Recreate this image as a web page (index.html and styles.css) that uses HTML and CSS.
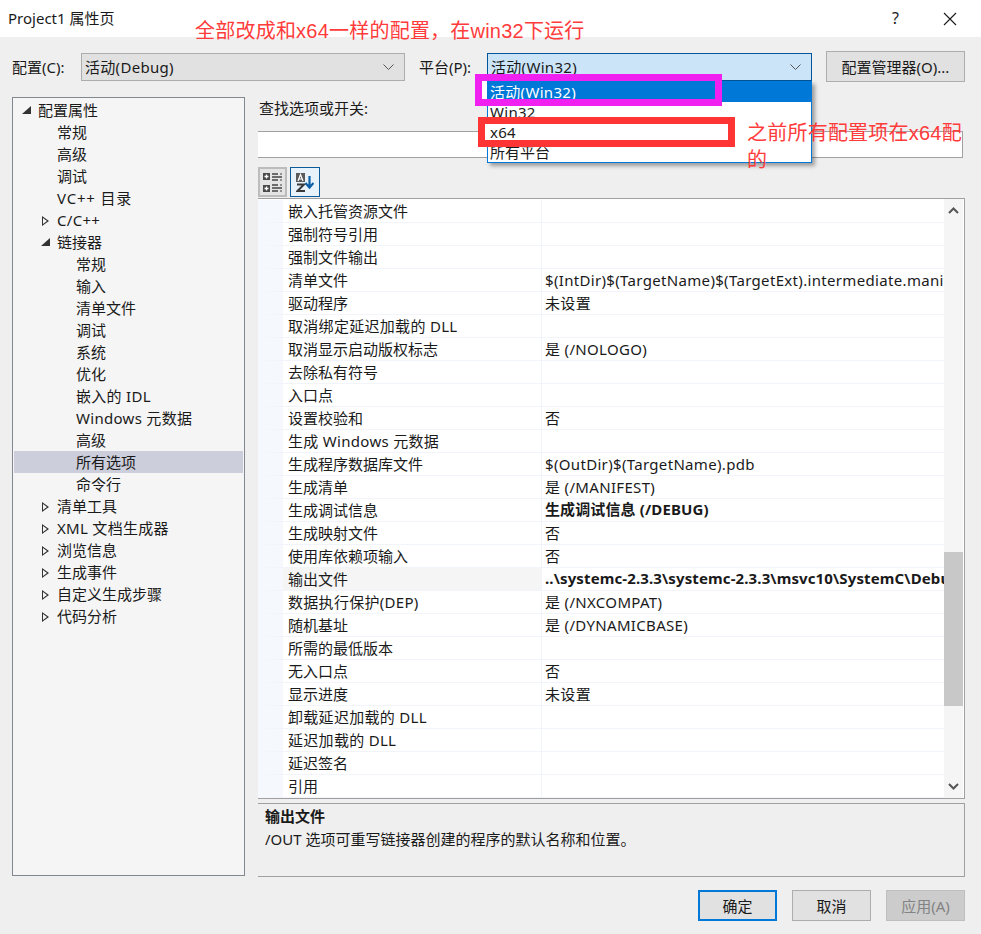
FILE: index.html
```html
<!DOCTYPE html>
<html lang="zh-CN">
<head>
<meta charset="utf-8">
<title>Project1 属性页</title>
<link rel="stylesheet" href="styles.css">
</head>
<body>
<div class="dialog">
  <header class="titlebar">
    <span class="title">Project1 属性页</span>
    <span class="help">?</span>
    <svg class="close" width="14" height="14" viewBox="0 0 14 14"><path d="M1 1L13 13M13 1L1 13" stroke="#1a1a1a" stroke-width="1.1" fill="none"/></svg>
  </header>

  <section class="config">
    <label class="config-label">配置(C):</label>
    <div class="select select-config"><span class="lat">活动(Debug)</span>
      <svg class="chev" width="11" height="6" viewBox="0 0 11 6"><path d="M.5 .5L5.5 5.5L10.5 .5" stroke="#555" fill="none"/></svg>
    </div>
    <label class="config-label platform-label">平台(P):</label>
    <div class="select select-platform"><span class="lat">活动(Win32)</span>
      <svg class="chev" width="11" height="6" viewBox="0 0 11 6"><path d="M.5 .5L5.5 5.5L10.5 .5" stroke="#555" fill="none"/></svg>
    </div>
    <button class="btn btn-manager">配置管理器(O)...</button>
  </section>

  <main class="panes">
    <nav class="tree">
      <div class="node l0"><i class="tri open"></i>配置属性</div>
      <div class="node l1">常规</div>
      <div class="node l1">高级</div>
      <div class="node l1">调试</div>
      <div class="node l1 lat-wide">VC++ 目录</div>
      <div class="node l1 lat"><i class="tri closed"></i>C/C++</div>
      <div class="node l1"><i class="tri open"></i>链接器</div>
      <div class="node l2">常规</div>
      <div class="node l2">输入</div>
      <div class="node l2">清单文件</div>
      <div class="node l2">调试</div>
      <div class="node l2">系统</div>
      <div class="node l2">优化</div>
      <div class="node l2 lat">嵌入的 IDL</div>
      <div class="node l2 lat">Windows 元数据</div>
      <div class="node l2">高级</div>
      <div class="node l2 selected">所有选项</div>
      <div class="node l2">命令行</div>
      <div class="node l1"><i class="tri closed"></i>清单工具</div>
      <div class="node l1 lat"><i class="tri closed"></i>XML 文档生成器</div>
      <div class="node l1"><i class="tri closed"></i>浏览信息</div>
      <div class="node l1"><i class="tri closed"></i>生成事件</div>
      <div class="node l1"><i class="tri closed"></i>自定义生成步骤</div>
      <div class="node l1"><i class="tri closed"></i>代码分析</div>
    </nav>

    <section class="options">
      <div class="search-label">查找选项或开关:</div>
      <div class="search"></div>
      <div class="toolbar">
        <button class="tool tool-cat">
          <svg width="19" height="19" viewBox="0 0 19 19">
            <rect x="0" y="0" width="7" height="7" fill="#4a4a4a"/><path d="M1.5 3.5H5.5M3.5 1.5V5.5" stroke="#fff" stroke-width="1.3"/>
            <rect x="0" y="12" width="7" height="7" fill="#4a4a4a"/><path d="M1.5 15.5H5.5M3.5 13.5V17.5" stroke="#fff" stroke-width="1.3"/>
            <path d="M9 1H15M9 4H19M9 7H15M9 12H15M9 15H19M9 18H15" stroke="#444" stroke-width="1.3"/>
            <path d="M17 1H19M17 7H19M17 12H19M17 18H19" stroke="#777" stroke-width="1.3"/>
          </svg>
        </button>
        <button class="tool tool-az">
          <svg width="18" height="19" viewBox="0 0 18 19">
            <rect x="0" y="0" width="9" height="9" fill="#5a5a5a"/>
            <path d="M2 8L4.5 1.5L7 8M2.9 6H6.1" stroke="#fff" stroke-width="1.2" fill="none"/>
            <path d="M1 11.5H8L1.5 18H9" stroke="#3a3a3a" stroke-width="2" fill="none"/>
            <path d="M13.5 3V14M9.5 10L13.5 14.5L17.5 10" stroke="#0b5fa8" stroke-width="2.2" fill="none"/>
          </svg>
        </button>
      </div>

      <div class="grid">
        <div class="rows">
          <div class="row"><div class="key">嵌入托管资源文件</div><div class="val"></div></div>
          <div class="row"><div class="key">强制符号引用</div><div class="val"></div></div>
          <div class="row"><div class="key">强制文件输出</div><div class="val"></div></div>
          <div class="row"><div class="key">清单文件</div><div class="val">$(IntDir)$(TargetName)$(TargetExt).intermediate.manifest</div></div>
          <div class="row"><div class="key">驱动程序</div><div class="val">未设置</div></div>
          <div class="row"><div class="key lat">取消绑定延迟加载的 DLL</div><div class="val"></div></div>
          <div class="row"><div class="key">取消显示启动版权标志</div><div class="val">是 (/NOLOGO)</div></div>
          <div class="row"><div class="key">去除私有符号</div><div class="val"></div></div>
          <div class="row"><div class="key">入口点</div><div class="val"></div></div>
          <div class="row"><div class="key">设置校验和</div><div class="val">否</div></div>
          <div class="row"><div class="key lat">生成 Windows 元数据</div><div class="val"></div></div>
          <div class="row"><div class="key">生成程序数据库文件</div><div class="val">$(OutDir)$(TargetName).pdb</div></div>
          <div class="row"><div class="key">生成清单</div><div class="val">是 (/MANIFEST)</div></div>
          <div class="row"><div class="key">生成调试信息</div><div class="val strong">生成调试信息 (/DEBUG)</div></div>
          <div class="row"><div class="key">生成映射文件</div><div class="val">否</div></div>
          <div class="row"><div class="key">使用库依赖项输入</div><div class="val">否</div></div>
          <div class="row current"><div class="key">输出文件</div><div class="val strong">..\systemc-2.3.3\systemc-2.3.3\msvc10\SystemC\Debug\SystemC.lib</div></div>
          <div class="row"><div class="key lat">数据执行保护(DEP)</div><div class="val">是 (/NXCOMPAT)</div></div>
          <div class="row"><div class="key">随机基址</div><div class="val">是 (/DYNAMICBASE)</div></div>
          <div class="row"><div class="key">所需的最低版本</div><div class="val"></div></div>
          <div class="row"><div class="key">无入口点</div><div class="val">否</div></div>
          <div class="row"><div class="key">显示进度</div><div class="val">未设置</div></div>
          <div class="row"><div class="key lat">卸载延迟加载的 DLL</div><div class="val"></div></div>
          <div class="row"><div class="key lat">延迟加载的 DLL</div><div class="val"></div></div>
          <div class="row"><div class="key">延迟签名</div><div class="val"></div></div>
          <div class="row"><div class="key">引用</div><div class="val"></div></div>
        </div>
        <div class="scrollbar">
          <svg class="sb-arrow" width="11" height="7" viewBox="0 0 11 7"><path d="M1 6L5.5 1.5L10 6" stroke="#555" stroke-width="2" fill="none"/></svg>
          <div class="sb-track"><div class="sb-thumb"></div></div>
          <svg class="sb-arrow" width="11" height="7" viewBox="0 0 11 7"><path d="M1 1L5.5 5.5L10 1" stroke="#555" stroke-width="2" fill="none"/></svg>
        </div>
      </div>

      <div class="desc">
        <div class="desc-title">输出文件</div>
        <div class="desc-text">/OUT 选项可重写链接器创建的程序的默认名称和位置。</div>
      </div>
    </section>
  </main>

  <footer class="footer">
    <button class="btn btn-foot btn-default">确定</button>
    <button class="btn btn-foot">取消</button>
    <button class="btn btn-foot btn-disabled">应用(A)</button>
  </footer>

  <div class="dropdown">
    <div class="opt opt-active lat">活动(Win32)</div>
    <div class="opt lat">Win32</div>
    <div class="opt lat">x64</div>
    <div class="opt">所有平台</div>
  </div>

  <div class="mark mark-magenta"></div>
  <div class="mark mark-red"></div>
  <div class="note note-top">全部改成和x64一样的配置，在win32下运行</div>
  <div class="note note-side">之前所有配置项在x64配<br>的</div>
</div>
</body>
</html>
```

FILE: styles.css
```css
* { box-sizing: border-box; }
html, body { margin: 0; padding: 0; }
body {
  width: 981px;
  height: 934px;
  overflow: hidden;
  font-family: "Noto Sans", "Noto Sans CJK SC", sans-serif;
  font-size: 15px;
  color: #1a1a1a;
}
.lat { letter-spacing: .3px; }
.lat-wide { letter-spacing: .8px; }
.dialog {
  position: relative;
  width: 981px;
  height: 934px;
  background: #efefef;
  display: flex;
  flex-direction: column;
}
.titlebar {
  height: 37px;
  flex: none;
  background: #fff;
  display: flex;
  align-items: center;
  padding: 0 24px 0 8px;
}
.title { flex: 1; line-height: 37px; }
.help { margin-right: 44px; line-height: 37px; font-size: 16px; }
.close { flex: none; }

.config {
  height: 31px;
  margin-top: 14px;
  padding: 0 16px 0 12px;
  display: flex;
  align-items: center;
  flex: none;
}
.config-label { width: 69px; flex: none; line-height: 28px; }
.platform-label { width: 68px; margin-left: 14px; }
.select {
  height: 28px;
  flex: none;
  display: flex;
  align-items: center;
  justify-content: space-between;
  padding: 0 10px 0 3px;
  border: 1px solid #adadad;
  background: #e1e1e1;
}
.select-config { width: 324px; }
.select-platform { width: 325px; background: #cce4f7; border-color: #005499; }
.btn {
  font: inherit;
  color: inherit;
  background: #e1e1e1;
  border: 1px solid #adadad;
  padding: 0;
  flex: none;
}
.btn-manager { width: 139px; height: 31px; margin-left: 14px; }

.panes {
  margin-top: 15px;
  padding-left: 12px;
  display: flex;
  gap: 13px;
  flex: none;
}
.tree {
  width: 233px;
  height: 779px;
  padding: 1px;
  border: 1px solid #828790;
  background: #f5f5f5;
}
.node {
  position: relative;
  height: 22px;
  line-height: 22px;
  white-space: nowrap;
}
.l0 { padding-left: 24px; }
.l1 { padding-left: 43px; }
.l2 { padding-left: 62px; }
.selected { background: #cccedb; }
.tri { position: absolute; top: 7px; width: 0; height: 0; }
.l0 .tri { left: 8px; }
.l1 .tri { left: 28px; }
.tri.open {
  border-bottom: 8px solid #333;
  border-left: 9px solid transparent;
}
.l1 .tri.open { left: 27px; }
.tri.closed {
  width: 7px;
  height: 10px;
  background: #333;
  clip-path: polygon(0 0, 100% 50%, 0 100%, 0 0, 1px 2px, 1px 8px, 5px 5px, 1px 2px);
}

.options { width: 707px; display: flex; flex-direction: column; }
.search-label { height: 22px; line-height: 22px; padding-left: 1px; }
.search {
  margin-top: 12px;
  width: 705px;
  height: 27px;
  background: #fff;
  border: 1px solid #a0a0a0;
  border-left: 0;
}
.toolbar { margin-top: 9px; height: 31px; display: flex; gap: 3px; }
.tool {
  width: 29px;
  height: 30px;
  padding: 0;
  display: flex;
  align-items: center;
  justify-content: center;
  border: 2px solid #bcbcbc;
  background: #e4e4e4;
}
.tool-az { width: 30px; border: 1px solid #0b5a9a; background: #e8f2fb; }

.grid {
  height: 601px;
  display: flex;
  background: #fff;
  border: 1px solid #a0a0a0;
  border-left: 0;
  border-bottom-width: 1px;
}
.rows { flex: 1; min-width: 0; padding-top: 1px; overflow: hidden; }
.row {
  height: 23px;
  display: flex;
  line-height: 22px;
  border-bottom: 1px solid #f1f4fb;
  border-left: 25px solid #f5f8fd;
  white-space: nowrap;
}
.key {
  width: 259px;
  flex: none;
  padding-left: 5px;
  border-right: 1px solid #f1f4fb;
}
.val { flex: 1; min-width: 0; padding-left: 3px; overflow: hidden; letter-spacing: .33px; }
.strong { font-weight: 700; line-height: 20px; letter-spacing: .12px; }
.current .key { background: #f5f5f5; }
.scrollbar {
  width: 19px;
  margin-right: 1px;
  flex: none;
  display: flex;
  flex-direction: column;
  align-items: center;
  background: #f5f5f5;
}
.sb-arrow { flex: none; margin: 8px 0; }
.sb-track { flex: 1; align-self: stretch; padding-top: 330px; }
.sb-thumb { height: 154px; background: #c8c8c8; }

.desc {
  margin-top: 4px;
  height: 74px;
  padding: 0 0 0 7px;
  border: 1px solid #a0a0a0;
  border-left: 0;
  line-height: 23px;
}
.desc-title { font-weight: 700; margin-top: 1px; }

.footer {
  margin-top: 13px;
  padding-right: 16px;
  display: flex;
  justify-content: flex-end;
  gap: 15px;
}
.btn-foot { width: 79px; height: 31px; }
.btn-default { border: 2px solid #0078d7; }
.btn-disabled { background: #ccc; color: #838383; border-color: #bfbfbf; }

.dropdown {
  position: absolute;
  left: 487px;
  top: 81px;
  width: 325px;
  height: 82px;
  background: #fff;
  border: 1px solid #0078d7;
  box-shadow: 3px 3px 4px rgba(0, 0, 0, .35);
  z-index: 2;
}
.opt { height: 20px; line-height: 20px; padding-left: 2px; }
.opt-active { background: #0078d7; color: #fff; }

.mark { position: absolute; z-index: 3; border: 7px solid; background: linear-gradient(#fff, #fff) no-repeat 0 0 / 5px 100%; }
.mark-magenta { left: 475px; top: 74px; width: 247px; height: 32px; border-color: #f020f0; }
.mark-red { left: 478px; top: 117px; width: 257px; height: 30px; border-color: #ff3535; background-size: 3px 100%; }

.note {
  position: absolute;
  z-index: 4;
  color: #ff3b3b;
  font-family: "Liberation Sans", "Noto Sans CJK SC", sans-serif;
  font-size: 20px;
  letter-spacing: .22px;
  white-space: nowrap;
}
.note-top { left: 195px; top: 18px; line-height: 27px; }
.note-side { left: 747px; top: 120px; line-height: 27px; }
```
